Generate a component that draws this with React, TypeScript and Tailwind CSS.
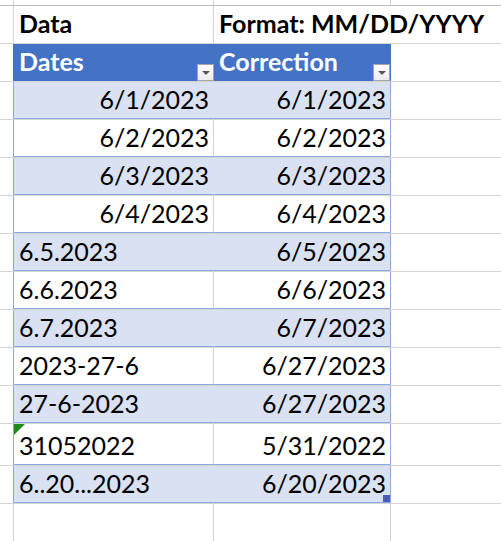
import React from "react";

type Row = {
  dates: string;
  datesAlign: "left" | "right";
  fixed: string;
  h?: string;
  flag?: boolean;
};

const rows: Row[] = [
  { dates: "6/1/2023", datesAlign: "right", fixed: "6/1/2023" },
  { dates: "6/2/2023", datesAlign: "right", fixed: "6/2/2023" },
  { dates: "6/3/2023", datesAlign: "right", fixed: "6/3/2023" },
  { dates: "6/4/2023", datesAlign: "right", fixed: "6/4/2023" },
  { dates: "6.5.2023", datesAlign: "left", fixed: "6/5/2023" },
  { dates: "6.6.2023", datesAlign: "left", fixed: "6/6/2023" },
  { dates: "6.7.2023", datesAlign: "left", fixed: "6/7/2023" },
  { dates: "2023-27-6", datesAlign: "left", fixed: "6/27/2023" },
  { dates: "27-6-2023", datesAlign: "left", fixed: "6/27/2023" },
  { dates: "31052022", datesAlign: "left", fixed: "5/31/2022", h: "h-[42px]", flag: true },
  { dates: "6..20...2023", datesAlign: "left", fixed: "6/20/2023" },
];

function FilterButton() {
  return (
    <div className="absolute right-0 bottom-0 w-[17px] h-[17px] border border-[#a5a5a5] bg-gradient-to-b from-white to-[#ececec] flex items-center justify-center">
      <div className="w-0 h-0 border-l-[4px] border-r-[4px] border-t-[4px] border-l-transparent border-r-transparent border-t-[#555555]" />
    </div>
  );
}

export default function App() {
  return (
    <div
      className="w-[501px] h-[541px] bg-white overflow-hidden text-[25px] text-black"
      style={{ fontFamily: "Lato, 'Open Sans', sans-serif" }}
    >
      {/* top sliver row */}
      <div className="flex h-[6px] border-b border-[#bdbdbd]">
        <div className="w-[14px] border-r border-[#d4d4d4]" />
        <div className="w-[200px] border-r border-[#d4d4d4]" />
        <div className="w-[177px] border-r border-[#d4d4d4]" />
        <div className="flex-1" />
      </div>

      {/* title row */}
      <div className="flex h-[38px] border-b border-[#d4d4d4] font-bold leading-none">
        <div className="w-[14px] border-r border-[#d4d4d4]" />
        <div className="w-[200px] border-r border-[#d4d4d4] flex items-end pl-[5px] pb-[7px]">Data</div>
        <div className="w-[177px] flex items-end pl-[5px] pb-[7px] whitespace-nowrap overflow-visible">
          Format: MM/DD/YYYY
        </div>
        <div className="flex-1" />
      </div>

      {/* table header */}
      <div className="flex h-[38px] border-b border-[#d4d4d4] font-bold leading-none">
        <div className="w-[14px] border-r border-[#4472c4]" />
        <div className="relative w-[200px] bg-[#4472c4] text-white flex items-end pl-[5px] pb-[7px]">
          Dates
          <FilterButton />
        </div>
        <div className="relative w-[177px] bg-[#4472c4] text-white border-r border-[#4472c4] flex items-end pl-[5px] pb-[7px]">
          Correction
          <FilterButton />
        </div>
        <div className="flex-1" />
      </div>

      {/* table body */}
      {rows.map((r, i) => {
        const band = i % 2 === 0;
        const last = i === rows.length - 1;
        return (
          <div
            key={i}
            className={`flex ${r.h ?? "h-[38px]"} border-b border-[#d4d4d4] leading-none`}
          >
            <div className="w-[14px] border-r border-[#8ea9db]" />
            <div
              className={`relative w-[200px] border-b border-[#8ea9db] flex items-end pb-[6px] ${
                band ? "bg-[#d9e1f2] border-r border-r-[#d9e1f2]" : "bg-white border-r border-r-[#d4d4d4]"
              } ${r.datesAlign === "right" ? "justify-end pr-[4px]" : "pl-[5px]"}`}
            >
              {r.flag && (
                <div className="absolute left-0 top-0 w-0 h-0 border-t-[11px] border-r-[11px] border-t-[#1e8a1e] border-r-transparent" />
              )}
              {r.dates}
            </div>
            <div
              className={`relative w-[177px] border-b border-r border-[#8ea9db] flex items-end justify-end pr-[4px] pb-[6px] ${
                band ? "bg-[#d9e1f2]" : "bg-white"
              }`}
            >
              {r.fixed}
              {last && <div className="absolute right-0 bottom-0 w-[7px] h-[7px] bg-[#4a5cb5]" />}
            </div>
            <div className="flex-1" />
          </div>
        );
      })}

      {/* empty bottom row */}
      <div className="flex h-[60px]">
        <div className="w-[14px] border-r border-[#d4d4d4]" />
        <div className="w-[200px] border-r border-[#d4d4d4]" />
        <div className="w-[177px] border-r border-[#d4d4d4]" />
        <div className="flex-1" />
      </div>
    </div>
  );
}
